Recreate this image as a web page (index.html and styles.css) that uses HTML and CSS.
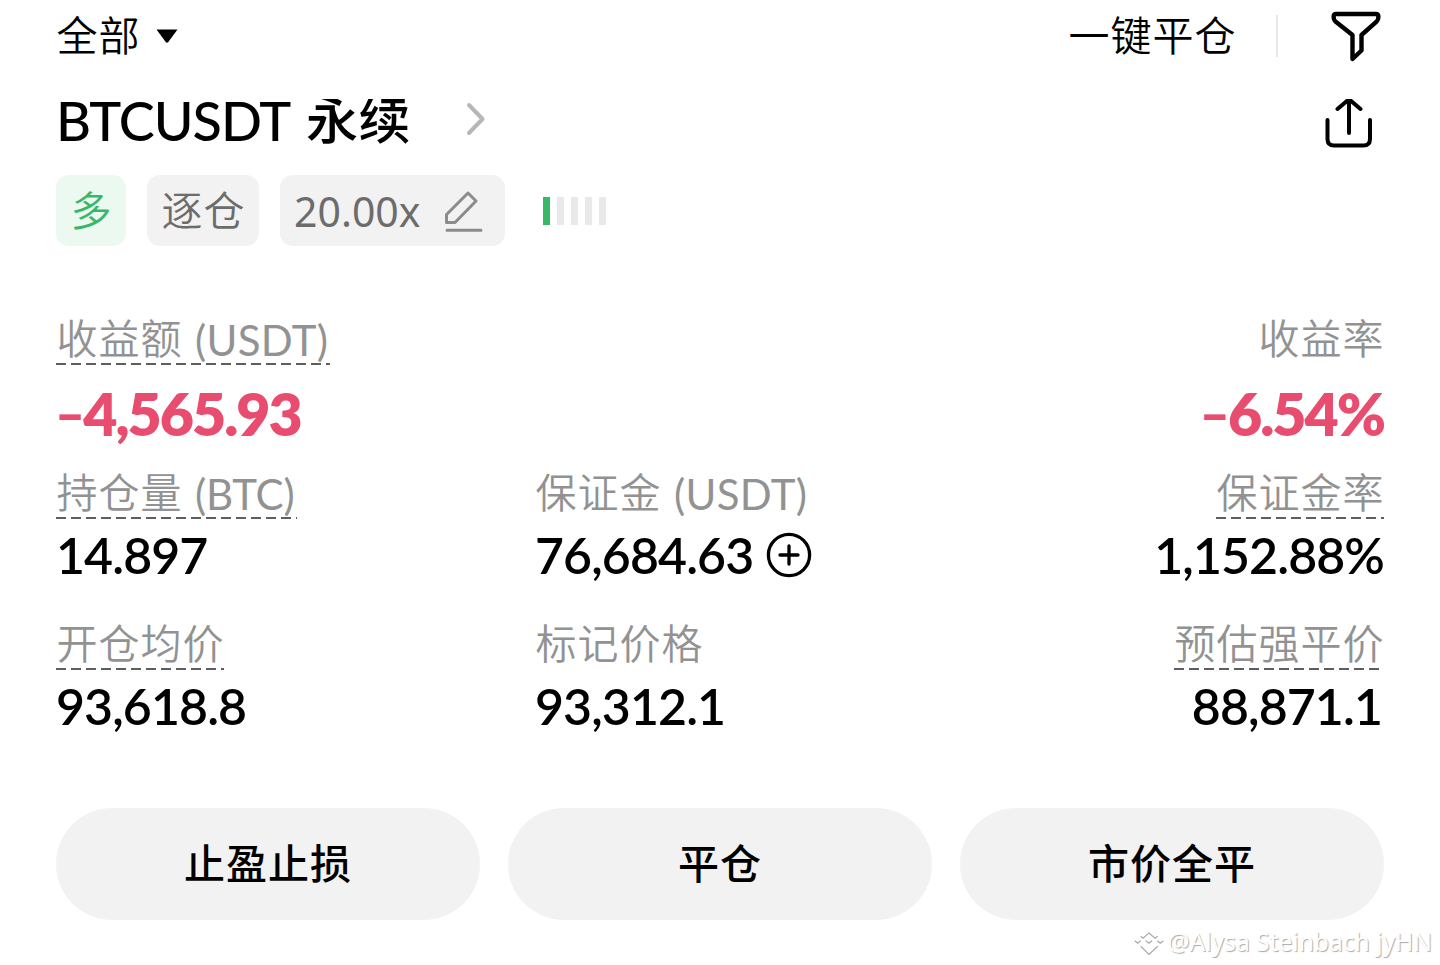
FILE: index.html
```html
<!DOCTYPE html>
<html lang="zh-CN">
<head>
<meta charset="utf-8">
<title>BTCUSDT 永续</title>
<link rel="stylesheet" href="styles.css">
</head>
<body>
<main class="page">
  <header class="topbar">
    <div class="filter-all"><span class="cjk">全部</span>
      <svg class="caret" width="22" height="15" viewBox="0 0 22 15"><path d="M.5.5h21L12.300 13q-1.300 1.300-2.600 0z" fill="#000"/></svg>
    </div>
    <div class="topbar-right">
      <span class="cjk">一键平仓</span>
      <i class="divider"></i>
      <svg class="funnel" width="52" height="52" viewBox="0 0 52 52" fill="none" stroke="#000" stroke-width="4.400" stroke-linejoin="round"><path d="M6 4h40q2.300 0 2.300 2.300v1.500q0 2-1.500 3.500L31.500 25v15.500L22.500 49V25L5.200 11.300Q3.700 9.800 3.700 7.800V6.300q0-2.300 2.300-2.300z"/></svg>
    </div>
  </header>

  <section class="title-row">
    <h1 class="pair"><span class="pair-code">BTCUSDT</span><span class="pair-type">永续</span></h1>
    <svg class="chevron" width="20" height="34" viewBox="0 0 20 34" fill="none" stroke="#b7b7b7" stroke-width="4" stroke-linecap="round" stroke-linejoin="round"><path d="M3 3l13.500 14L3 31"/></svg>
    <svg class="share" width="48" height="50" viewBox="0 0 48 50" fill="none" stroke="#000" stroke-width="4" stroke-linecap="round" stroke-linejoin="round"><path d="M2.500 21v19q0 6.500 6.500 6.500h29.500q6.500 0 6.500-6.500V21M24 2v32M12.500 10L24 .200 35.500 10"/></svg>
  </section>

  <section class="tags">
    <span class="tag tag-long"><span class="cjk">多</span></span>
    <span class="tag tag-mode"><span class="cjk">逐仓</span></span>
    <span class="tag tag-leverage"><span class="leverage">20.00x</span>
      <svg class="pencil" width="40" height="42" viewBox="0 0 40 42" fill="none" stroke="#8b8b8b" stroke-width="3" stroke-linejoin="round" stroke-linecap="round"><path d="M2.500 24.500L24 3l8 8L11 32.500H2.500zM3 40.300h34"/></svg>
    </span>
    <span class="risk"><i class="bar bar-on"></i><i class="bar"></i><i class="bar"></i><i class="bar"></i><i class="bar"></i></span>
  </section>

  <section class="metrics">
    <div class="metric">
      <div class="label dashed"><span class="cjk">收益额</span><span class="unit unit-usdt">(USDT)</span></div>
      <div class="pnl"><span class="sign">–</span>4,565.93</div>
    </div>
    <div class="metric metric-end metric-wide">
      <div class="label"><span class="cjk">收益率</span></div>
      <div class="pnl"><span class="sign">–</span>6.54%</div>
    </div>

    <div class="metric">
      <div class="label dashed"><span class="cjk">持仓量</span><span class="unit unit-btc">(BTC)</span></div>
      <div class="value">14.897</div>
    </div>
    <div class="metric">
      <div class="label"><span class="cjk">保证金</span><span class="unit unit-usdt">(USDT)</span></div>
      <div class="value">76,684.63
        <svg class="plus" width="46" height="46" viewBox="0 0 46 46" fill="none" stroke="#000" stroke-width="3.300" stroke-linecap="round"><circle cx="23" cy="23" r="20.600"/><path d="M23 14v18M14 23h18"/></svg>
      </div>
    </div>
    <div class="metric metric-end">
      <div class="label dashed"><span class="cjk">保证金率</span></div>
      <div class="value">1,152.88%</div>
    </div>

    <div class="metric">
      <div class="label dashed"><span class="cjk">开仓均价</span></div>
      <div class="value">93,618.8</div>
    </div>
    <div class="metric">
      <div class="label"><span class="cjk">标记价格</span></div>
      <div class="value">93,312.1</div>
    </div>
    <div class="metric metric-end">
      <div class="label dashed"><span class="cjk">预估强平价</span></div>
      <div class="value value-last">88,871.1</div>
    </div>
  </section>

  <section class="actions">
    <button class="action">止盈止损</button>
    <button class="action">平仓</button>
    <button class="action">市价全平</button>
  </section>

  <div class="watermark">
    <svg class="mark" width="30" height="28" viewBox="0 0 30 28" fill="none" stroke="#aaa" stroke-width="1.200"><path d="M6.700 8.300L9 10.300 15 5l6 5.300 2.700-2M.7 12.700l3 2.600 3-2.600M11.700 12.700l3.300 2.600 3-2.600M23.300 12.700l3 2.600 3-2.600M6.700 18.300l8.300 8.200 8.700-8.200"/></svg>
    <span>@Alysa Steinbach jyHN</span>
  </div>
</main>
</body>
</html>
```
FILE: styles.css
```css
* { box-sizing: border-box; }
body {
  margin: 0;
  background: #fff;
  color: #000;
  font-family: "Noto Sans CJK SC", "Noto Sans", sans-serif;
  font-size: 42px;
}
svg { display: block; flex: none; }
.page {
  position: relative;
  width: 1440px;
  height: 965px;
  padding: 0 56px;
  overflow: hidden;
}
/* Chinese runs: glyphs slightly smaller than their 42px advance */
.cjk {
  margin-top: -6px;
  padding-left: .5px;
  margin-right: -.5px;
  font-size: 41px;
  font-weight: 350;
  letter-spacing: 1px;
  white-space: nowrap;
}
.topbar {
  position: relative;
  z-index: 1;
  display: flex;
  justify-content: space-between;
  height: 99px;
  padding-bottom: 27px;
  background: #fff;
  line-height: 72px;
}
.filter-all { display: flex; align-items: center; gap: 16px; }
.topbar-right { display: flex; align-items: center; }
.divider { width: 2px; height: 42px; margin: 0 52px 0 40px; background: #e8e8e8; }
.funnel { margin-right: 2px; }

.title-row {
  display: flex;
  align-items: flex-start;
  height: 50px;
}
.pair {
  display: flex;
  margin: -20px 0 0;
  font-size: 52px;
  font-weight: 500;
  line-height: 84px;
}
.pair-code {
  width: 250px;
  font-family: Lato, sans-serif;
  font-size: 54px;
  font-weight: 500;
  letter-spacing: -1px;
}
.pair-type { margin-top: -4px; letter-spacing: .5px; }
.chevron { margin: 3px 0 0 55px; }
.share { margin-left: auto; margin-right: 11px; }

.tags { display: flex; height: 71px; margin-top: 26px; }
.tag {
  display: flex;
  align-items: center;
  justify-content: center;
  height: 71px;
  margin-right: 21px;
  border-radius: 13px;
  background: #f2f2f2;
  color: #6c6c6c;
}
.tag-long { width: 70px; background: #ecf9f1; color: #36b868; }
.tag-mode { width: 112px; }
.tag-leverage { width: 225px; justify-content: space-between; padding: 0 21px 0 14px; }
.leverage { margin-top: 1px; font-family: "Noto Sans", sans-serif; font-size: 41px; }
.risk { display: flex; gap: 7px; align-items: center; margin-left: 17px; }
.bar { width: 7px; height: 28px; background: #e9e9e9; }
.bar-on { background: #36b868; }

.metrics {
  display: grid;
  grid-template-columns: 479px 424px 425px;
  grid-template-rows: 154px 151px 122px;
  margin-top: 69px;
}
.metric { display: flex; flex-direction: column; align-items: flex-start; }
.metric-end { align-items: flex-end; }
.metric-wide { grid-column: 2 / 4; }
.label { display: flex; height: 50px; color: #929292; line-height: 50px; }
.label .cjk { margin-top: -4px; }
.dashed {
  background: repeating-linear-gradient(90deg, #5e5e5e 0 10px, transparent 10px 15px) left bottom / 100% 2px no-repeat;
}
.unit { padding-left: 13px; font-family: Lato, sans-serif; white-space: nowrap; }
.unit-usdt { width: 148px; letter-spacing: .3px; }
.unit-btc { width: 115px; letter-spacing: -.2px; }
.pnl {
  display: flex;
  color: #e84d70;
  font-family: Lato, sans-serif;
  font-size: 59px;
  font-weight: 800;
  letter-spacing: -2px;
  line-height: 97px;
}
.sign { margin-left: -1px; font-size: 52px; }
.value {
  display: flex;
  align-items: center;
  gap: 13px;
  font-family: Lato, sans-serif;
  font-size: 50px;
  font-weight: 600;
  letter-spacing: -.9px;
  line-height: 72px;
}
.value-last { padding-right: 2px; }

.actions { display: grid; grid-template-columns: repeat(3, 1fr); gap: 28px; margin-top: 66px; }
.action {
  height: 112px;
  padding: 0 0 5px;
  border: 0;
  border-radius: 56px;
  background: #f2f2f2;
  color: #000;
  font: 500 41px/107px "Noto Sans CJK SC", sans-serif;
  letter-spacing: 1px;
}
.watermark {
  position: absolute;
  right: 8px;
  bottom: 6px;
  display: flex;
  align-items: center;
  gap: 3px;
  color: #fff;
  font: 24.6px/34px "Noto Sans", sans-serif;
  text-shadow: 1px 1px 1px #aaa;
}
```
